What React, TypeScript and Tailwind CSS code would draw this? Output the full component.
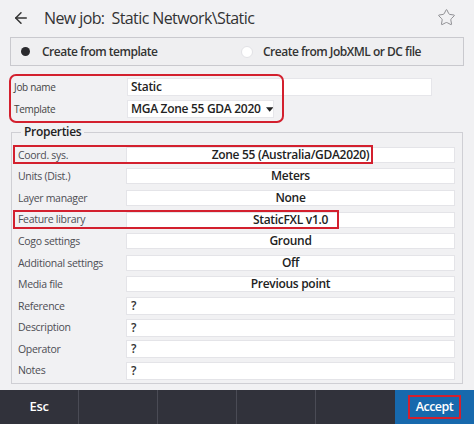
import { ArrowLeft, Star } from 'lucide-react';

type Prop = { label: string; value: string; kind: 'select' | 'text'; mark?: number };

// mark = width (px) of the red annotation box, measured from the row's left edge
const PROPS: Prop[] = [
  { label: 'Coord. sys.', value: 'Zone 55 (Australia/GDA2020)', kind: 'select', mark: 360 },
  { label: 'Units (Dist.)', value: 'Meters', kind: 'select' },
  { label: 'Layer manager', value: 'None', kind: 'select' },
  { label: 'Feature library', value: 'StaticFXL v1.0', kind: 'select', mark: 326 },
  { label: 'Cogo settings', value: 'Ground', kind: 'select' },
  { label: 'Additional settings', value: 'Off', kind: 'select' },
  { label: 'Media file', value: 'Previous point', kind: 'select' },
  { label: 'Reference', value: '?', kind: 'text' },
  { label: 'Description', value: '?', kind: 'text' },
  { label: 'Operator', value: '?', kind: 'text' },
  { label: 'Notes', value: '?', kind: 'text' },
];

function PropRow({ p }: { p: Prop }) {
  return (
    <div className="relative flex items-center h-[21.6px]">
      <div className="w-[108px] shrink-0 text-[10.5px] tracking-[-0.3px] text-[#4d4d53] leading-none whitespace-nowrap">
        {p.label}
      </div>
      {p.kind === 'select' ? (
        <div className="flex-1 h-[16px] bg-white border border-[#e4e4e8] flex items-center justify-center text-[12px] tracking-[-0.3px] font-semibold text-[#222] leading-none">
          {p.value}
        </div>
      ) : (
        <div className="flex-1 h-[18px] bg-white border border-[#e4e4e8] flex items-center pl-[4px] text-[12px] font-semibold text-[#333] leading-none">
          {p.value}
        </div>
      )}
      {p.mark && (
        <div
          className="absolute left-[-5px] top-[1px] h-[19px] border-2 border-[#d3202e]"
          style={{ width: p.mark }}
        />
      )}
    </div>
  );
}

export default function App() {
  return (
    <div
      className="w-[474px] h-[424px] bg-[#f1f1f3] flex flex-col overflow-hidden text-[#222]"
      style={{ fontFamily: '"Open Sans", "Noto Sans", sans-serif' }}
    >
      {/* ── Title bar ─────────────────────────────────────────── */}
      <header className="h-[37px] flex items-center pl-[12px] pr-[18px] pb-[2px] shrink-0">
        <ArrowLeft className="w-[18px] h-[18px] text-[#333]" strokeWidth={2} />
        <h1 className="ml-[14px] text-[16px] tracking-[-0.6px] text-[#333] leading-none">
          New job:&nbsp; Static Network\Static
        </h1>
        <Star className="ml-auto w-[19px] h-[19px] text-[#8a8a8e]" strokeWidth={1.2} />
      </header>

      {/* ── Create mode radios ────────────────────────────────── */}
      <div className="mx-[10px] h-[29px] border border-[#c9c9ce] bg-[#efeff1] flex items-center shrink-0">
        <div className="flex items-center ml-[10px] w-[220px]">
          <span className="w-[9px] h-[9px] rounded-full bg-[#2a2a2e]" />
          <span className="ml-[12px] text-[12px] tracking-[-0.5px] font-semibold text-[#333]">Create from template</span>
        </div>
        <div className="flex items-center">
          <span className="w-[12px] h-[12px] rounded-full bg-white border border-[#e2e2e6]" />
          <span className="ml-[10px] text-[12px] tracking-[-0.5px] font-semibold text-[#333]">
            Create from JobXML or DC file
          </span>
        </div>
      </div>

      {/* ── Job name / template ───────────────────────────────── */}
      <div className="relative mt-[8px] h-[49px] pl-[14px] pt-[4px] flex flex-col gap-[4px] shrink-0">
        <div className="flex items-center h-[18px]">
          <div className="w-[113px] text-[10px] tracking-[-0.3px] text-[#444]">Job name</div>
          <div className="w-[305px] h-[18px] bg-white border border-[#e6e6ea] flex items-center pl-[3px] text-[12px] tracking-[-0.3px] font-semibold">
            Static
          </div>
        </div>
        <div className="flex items-center h-[18px]">
          <div className="w-[113px] text-[10px] tracking-[-0.3px] text-[#444]">Template</div>
          <div className="w-[147px] h-[18px] bg-white border border-[#e6e6ea] flex items-center pl-[3px] text-[12px] tracking-[-0.3px] font-semibold whitespace-nowrap">
            MGA Zone 55 GDA 2020
            <svg className="ml-[5px]" width="8" height="5" viewBox="0 0 8 5">
              <path d="M0 0 L8 0 L4 5 Z" fill="#222" />
            </svg>
          </div>
        </div>
        <div className="absolute left-[9px] top-0 w-[275px] h-[49px] border-2 border-[#d3202e] rounded-[7px]" />
      </div>

      {/* ── Properties ────────────────────────────────────────── */}
      <fieldset className="mx-[11px] mt-[3px] border border-[#cfcfd4] pl-[6px] pr-[7px] pt-[6px] pb-[1px] shrink-0">
        <legend className="ml-[3px] px-[3px] text-[12px] tracking-[-0.3px] font-semibold text-[#222] leading-none">
          Properties
        </legend>
        {PROPS.map((p) => (
          <PropRow key={p.label} p={p} />
        ))}
      </fieldset>

      {/* ── Softkey bar ───────────────────────────────────────── */}
      <footer className="mt-auto h-[34px] grid grid-cols-6 bg-[#31323b] shrink-0">
        <div className="flex items-center justify-center text-white text-[13px] tracking-[-0.3px] font-semibold border-r border-[#4a4b55]">
          Esc
        </div>
        <div className="border-r border-[#4a4b55]" />
        <div className="border-r border-[#4a4b55]" />
        <div className="border-r border-[#4a4b55]" />
        <div />
        <div className="bg-[#1769ad] flex items-center justify-center">
          <span className="px-[6px] py-[2px] border-2 border-[#d3202e] text-white text-[12.5px] tracking-[-0.5px] font-semibold leading-[16px]">
            Accept
          </span>
        </div>
      </footer>
    </div>
  );
}
